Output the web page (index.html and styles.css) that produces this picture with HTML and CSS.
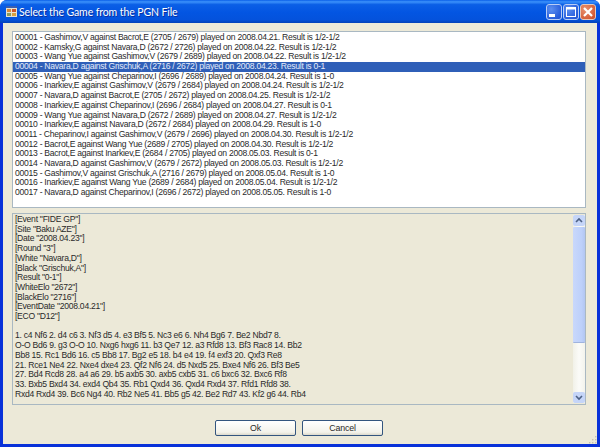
FILE: index.html
```html
<!DOCTYPE html>
<html lang="en">
<head>
    <meta charset="UTF-8">
    <title>Select the Game from the PGN File</title>
    <link rel="stylesheet" href="styles.css">
</head>
<body>

<div class="window">
    <div class="titlebar">
        <svg class="app-icon" width="11" height="11" viewBox="0 0 11 11">
            <rect x="0" y="0" width="11" height="11" fill="#e8e2cf"/>
            <rect x="0" y="0" width="11" height="2" fill="#3a5fb0"/>
            <rect x="1" y="3" width="4" height="3" fill="#d8893a"/>
            <rect x="6" y="3" width="4" height="3" fill="#c9562e"/>
            <rect x="1" y="7" width="4" height="3" fill="#8a9a60"/>
            <rect x="6" y="7" width="4" height="3" fill="#d8a040"/>
        </svg>
        <span class="title">Select the Game from the PGN File</span>
        <div class="caption-btns">
            <div class="cap-btn">
                <svg width="14" height="14" viewBox="0 0 14 14"><rect x="2" y="9" width="6" height="3" fill="#fff"/></svg>
            </div>
            <div class="cap-btn">
                <svg width="14" height="14" viewBox="0 0 14 14"><rect x="2.5" y="2.5" width="9" height="9" fill="none" stroke="#fff"/><rect x="2" y="2" width="10" height="2.5" fill="#fff"/></svg>
            </div>
            <div class="cap-btn close">
                <svg width="14" height="14" viewBox="0 0 14 14"><path d="M3 3l8 8M11 3l-8 8" stroke="#fff" stroke-width="2.2" fill="none"/></svg>
            </div>
        </div>
    </div>

    <div class="client">
        <div class="game-list">
            <div class="row">00001 - Gashimov,V against Bacrot,E (2705 / 2679) played on 2008.04.21. Result is 1/2-1/2</div>
            <div class="row">00002 - Kamsky,G against Navara,D (2672 / 2726) played on 2008.04.22. Result is 1/2-1/2</div>
            <div class="row">00003 - Wang Yue against Gashimov,V (2679 / 2689) played on 2008.04.22. Result is 1/2-1/2</div>
            <div class="row selected">00004 - Navara,D against Grischuk,A (2716 / 2672) played on 2008.04.23. Result is 0-1</div>
            <div class="row">00005 - Wang Yue against Cheparinov,I (2696 / 2689) played on 2008.04.24. Result is 1-0</div>
            <div class="row">00006 - Inarkiev,E against Gashimov,V (2679 / 2684) played on 2008.04.24. Result is 1/2-1/2</div>
            <div class="row">00007 - Navara,D against Bacrot,E (2705 / 2672) played on 2008.04.25. Result is 1/2-1/2</div>
            <div class="row">00008 - Inarkiev,E against Cheparinov,I (2696 / 2684) played on 2008.04.27. Result is 0-1</div>
            <div class="row">00009 - Wang Yue against Navara,D (2672 / 2689) played on 2008.04.27. Result is 1/2-1/2</div>
            <div class="row">00010 - Inarkiev,E against Navara,D (2672 / 2684) played on 2008.04.29. Result is 1-0</div>
            <div class="row">00011 - Cheparinov,I against Gashimov,V (2679 / 2696) played on 2008.04.30. Result is 1/2-1/2</div>
            <div class="row">00012 - Bacrot,E against Wang Yue (2689 / 2705) played on 2008.04.30. Result is 1/2-1/2</div>
            <div class="row">00013 - Bacrot,E against Inarkiev,E (2684 / 2705) played on 2008.05.03. Result is 0-1</div>
            <div class="row">00014 - Navara,D against Gashimov,V (2679 / 2672) played on 2008.05.03. Result is 1/2-1/2</div>
            <div class="row">00015 - Gashimov,V against Grischuk,A (2716 / 2679) played on 2008.05.04. Result is 1-0</div>
            <div class="row">00016 - Inarkiev,E against Wang Yue (2689 / 2684) played on 2008.05.04. Result is 1/2-1/2</div>
            <div class="row">00017 - Navara,D against Cheparinov,I (2696 / 2672) played on 2008.05.05. Result is 1-0</div>
        </div>

        <div class="pgn-box">
            <div class="pgn-text">
                <div>[Event "FIDE GP"]</div>
                <div>[Site "Baku AZE"]</div>
                <div>[Date "2008.04.23"]</div>
                <div>[Round "3"]</div>
                <div>[White "Navara,D"]</div>
                <div>[Black "Grischuk,A"]</div>
                <div>[Result "0-1"]</div>
                <div>[WhiteElo "2672"]</div>
                <div>[BlackElo "2716"]</div>
                <div>[EventDate "2008.04.21"]</div>
                <div>[ECO "D12"]</div>
                <div>&nbsp;</div>
                <div>1. c4 Nf6 2. d4 c6 3. Nf3 d5 4. e3 Bf5 5. Nc3 e6 6. Nh4 Bg6 7. Be2 Nbd7 8.</div>
                <div>O-O Bd6 9. g3 O-O 10. Nxg6 hxg6 11. b3 Qe7 12. a3 Rfd8 13. Bf3 Rac8 14. Bb2</div>
                <div>Bb8 15. Rc1 Bd6 16. c5 Bb8 17. Bg2 e5 18. b4 e4 19. f4 exf3 20. Qxf3 Re8</div>
                <div>21. Rce1 Ne4 22. Nxe4 dxe4 23. Qf2 Nf6 24. d5 Nxd5 25. Bxe4 Nf6 26. Bf3 Be5</div>
                <div>27. Bd4 Rcd8 28. a4 a6 29. b5 axb5 30. axb5 cxb5 31. c6 bxc6 32. Bxc6 Rf8</div>
                <div>33. Bxb5 Bxd4 34. exd4 Qb4 35. Rb1 Qxd4 36. Qxd4 Rxd4 37. Rfd1 Rfd8 38.</div>
                <div>Rxd4 Rxd4 39. Bc6 Ng4 40. Rb2 Ne5 41. Bb5 g5 42. Be2 Rd7 43. Kf2 g6 44. Rb4</div>
            </div>
            <div class="scrollbar">
                <div class="sb-btn">
                    <svg width="12" height="11" viewBox="0 0 12 11"><path d="M3 7l3-3 3 3" fill="none" stroke="#4d6185" stroke-width="1.6"/></svg>
                </div>
                <div class="sb-thumb"></div>
                <div class="sb-track"></div>
                <div class="sb-btn">
                    <svg width="12" height="11" viewBox="0 0 12 11"><path d="M3 4l3 3 3-3" fill="none" stroke="#4d6185" stroke-width="1.6"/></svg>
                </div>
            </div>
        </div>

        <div class="buttons">
            <button class="btn">Ok</button>
            <button class="btn">Cancel</button>
        </div>

        <svg class="grip" width="8" height="8" viewBox="0 0 8 8">
            <rect x="6" y="0" width="1.4" height="1.4" fill="#c4c1b0"/>
            <rect x="3" y="3" width="1.4" height="1.4" fill="#c4c1b0"/>
            <rect x="6" y="3" width="1.4" height="1.4" fill="#c4c1b0"/>
            <rect x="0" y="6" width="1.4" height="1.4" fill="#c4c1b0"/>
            <rect x="3" y="6" width="1.4" height="1.4" fill="#c4c1b0"/>
            <rect x="6" y="6" width="1.4" height="1.4" fill="#c4c1b0"/>
        </svg>
    </div>
</div>

</body>
</html>
```

FILE: styles.css
```css
html, body {
    margin: 0;
    padding: 0;
    width: 600px;
    height: 447px;
    overflow: hidden;
    background: #ffffff;
}

.window {
    width: 600px;
    height: 447px;
    box-sizing: border-box;
    display: flex;
    flex-direction: column;
    background: #0831d9;
    border-radius: 7px 7px 0 0;
    overflow: hidden;
    font-family: "Liberation Sans", Arial, sans-serif;
}

/* Barra de titulo estilo XP */
.titlebar {
    height: 23px;
    flex: none;
    display: flex;
    align-items: center;
    padding: 0 4px 0 6px;
    background: linear-gradient(180deg, #0a5fe8 0%, #3c92fb 8%, #0b5fe6 20%, #0355e2 55%, #0452dc 85%, #0341b8 100%);
}
.app-icon { flex: none; margin-right: 2px; }
.title {
    color: #ffffff;
    font-family: Lato, "Liberation Sans", sans-serif;
    font-size: 10.5px;
    letter-spacing: -0.1px;
    text-shadow: 1px 1px 0 #0b2f9c;
}
.caption-btns { margin-left: auto; display: flex; gap: 1px; }
.cap-btn {
    width: 16px;
    height: 16px;
    box-sizing: border-box;
    border: 1px solid #b9cdf5;
    border-radius: 3px;
    display: flex;
    align-items: center;
    justify-content: center;
    background: radial-gradient(circle at 30% 30%, #5c8ff0, #2a5fdc 70%, #2553cf);
}
.cap-btn.close {
    border-color: #e8c8b8;
    background: radial-gradient(circle at 30% 30%, #e8916f, #d6603a 70%, #c44a28);
}

.client {
    flex: 1;
    margin: 0 3px 3px 3px;
    padding: 8px 11px 0 9px;
    background: #ece9d8;
    display: flex;
    flex-direction: column;
    position: relative;
}

.game-list {
    height: 177px;
    flex: none;
    box-sizing: border-box;
    background: #ffffff;
    border: 1px solid #a9b8c2;
    padding: 1px 0;
    font-size: 8.6px;
    letter-spacing: -0.27px;
    color: #2a2a2a;
}
.row {
    height: 9.7px;
    line-height: 9.7px;
    padding-left: 2px;
    white-space: nowrap;
}
.row.selected {
    background: #2f5fb8;
    color: #e4ebf8;
}

.pgn-box {
    height: 192px;
    flex: none;
    margin-top: 5px;
    box-sizing: border-box;
    border: 1px solid #a9b8c2;
    display: flex;
    font-size: 8.6px;
    letter-spacing: -0.27px;
    color: #2a2a2a;
}
.pgn-text {
    flex: 1;
    padding: 1px 0 0 2px;
    line-height: 9.7px;
    white-space: nowrap;
    overflow: hidden;
}

.scrollbar {
    width: 12px;
    flex: none;
    margin: 1px 0;
    display: flex;
    flex-direction: column;
    background: linear-gradient(90deg, #f1f1e8, #fbfbf8 50%, #f3f3ec);
}
.sb-btn {
    height: 11px;
    flex: none;
    display: flex;
    background: #c5d5f8;
    border-radius: 2px;
}
.sb-thumb {
    height: 115px;
    flex: none;
    margin-top: 1px;
    background: linear-gradient(90deg, #c9d8fb 0%, #bdd0fa 70%, #b2c6f2 100%);
    border-bottom: 1px solid #9fb3de;
    border-radius: 1px;
}
.sb-track { flex: 1; }

.buttons {
    display: flex;
    justify-content: center;
    gap: 6px;
    margin-top: 15px;
}
.btn {
    width: 81px;
    height: 16px;
    padding: 0;
    box-sizing: border-box;
    border: 1px solid #33557f;
    border-radius: 2px;
    background: linear-gradient(180deg, #ffffff, #f3f2ea 80%, #dcd9cc);
    font-family: "Liberation Sans", Arial, sans-serif;
    font-size: 8.8px;
    letter-spacing: -0.15px;
    color: #2a2a2a;
}

/* Grip de redimensionar, encima del fondo */
.grip {
    position: absolute;
    right: 0;
    bottom: 0;
}
```
